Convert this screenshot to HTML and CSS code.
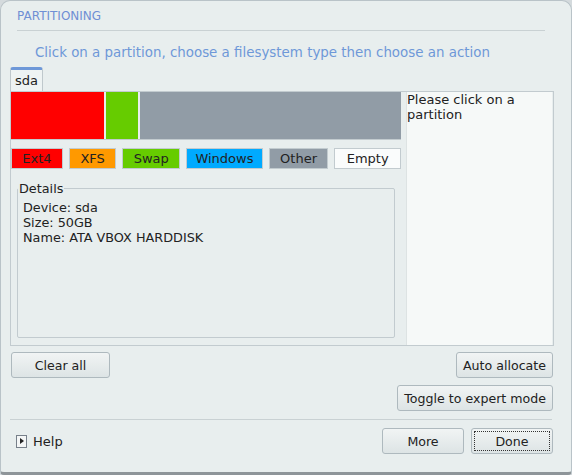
FILE: index.html
```html
<!DOCTYPE html>
<html lang="en">
<head>
    <meta charset="UTF-8">
    <title>Partitioning</title>
    <link rel="stylesheet" href="styles.css">
</head>
<body>
    <div class="window">
        <div class="heading">PARTITIONING</div>
        <p class="subtitle">Click on a partition, choose a filesystem type then choose an action</p>

        <div class="tabs">
            <span class="tab">sda</span>
        </div>
        <div class="panel">
            <div class="left">
                <div class="disk">
                    <div class="part ext4" style="width: 93px"></div>
                    <div class="part swap" style="width: 32px"></div>
                    <div class="part other grow"></div>
                </div>
                <div class="legend">
                    <span class="fs ext4">Ext4</span>
                    <span class="fs xfs">XFS</span>
                    <span class="fs swap">Swap</span>
                    <span class="fs windows">Windows</span>
                    <span class="fs other">Other</span>
                    <span class="fs empty">Empty</span>
                </div>
                <fieldset class="details">
                    <legend>Details</legend>
                    <div>Device: sda</div>
                    <div>Size: 50GB</div>
                    <div>Name: ATA VBOX HARDDISK</div>
                </fieldset>
            </div>
            <div class="info">Please click on a partition</div>
        </div>

        <div class="actions">
            <button class="btn clear">Clear all</button>
            <div class="right-actions">
                <button class="btn">Auto allocate</button>
                <button class="btn">Toggle to expert mode</button>
            </div>
        </div>

        <div class="footer">
            <div class="help"><span class="arrow"></span>Help</div>
            <div class="footer-btns">
                <button class="btn wide">More</button>
                <button class="btn wide focus">Done</button>
            </div>
        </div>
    </div>
</body>
</html>
```

FILE: styles.css
```css
body {
    margin: 0;
    background-color: #d4dadd;
    font-family: "DejaVu Sans", sans-serif;
    font-size: 12px;
    color: #222;
}
.window {
    box-sizing: border-box;
    width: 572px;
    height: 475px;
    background-color: #e8eeee;
    border: 1px solid #b9c3c8;
    border-bottom: 3px solid #8e9599;
    border-radius: 10px 10px 4px 4px;
    padding: 8px 17px 0 9px;
}
.heading {
    margin: 0 9px 0 7px;
    padding-bottom: 7px;
    border-bottom: 1px solid #c9d1d3;
    color: #6f8fd4;
    font-size: 12px;
}
.subtitle {
    margin: 14px 0 0 25px;
    color: #6e98d8;
    font-size: 13.4px;
}
.tabs {
    display: flex;
    margin-top: 7px;
}
.tab {
    display: inline-block;
    padding: 2px 4px 1px 4px;
    height: 18px;
    border: 1px solid #bfc8cc;
    border-top: 3px solid #6e98d8;
    border-bottom: none;
    border-radius: 3px 3px 0 0;
    background-color: #eef3f3;
    font-size: 13px;
    line-height: 18px;
}
.panel {
    display: flex;
    height: 253px;
    border: 1px solid #c2cbcf;
    background-color: #e8eeee;
}
.left {
    width: 390px;
    display: flex;
    flex-direction: column;
}
.disk {
    display: flex;
    height: 47px;
    border-bottom: 1px solid #c2cbcf;
}
.part {
    margin-right: 2px;
}
.part.grow {
    flex: 1;
    margin-right: 0;
}
.legend {
    display: flex;
    gap: 6px;
    margin-top: 8px;
}
.fs {
    box-sizing: border-box;
    height: 21px;
    line-height: 19px;
    text-align: center;
    border: 1px solid #c2cbcf;
    font-size: 13px;
    color: #222;
}
.ext4 { background-color: #ff0000; }
.xfs { background-color: #ff9900; }
.swap { background-color: #66cc00; }
.windows { background-color: #00aaff; }
.other { background-color: #919ca6; }
.empty { background-color: #ffffff; }
.legend .ext4 { width: 52px; }
.legend .xfs { width: 48px; }
.legend .swap { width: 58px; }
.legend .windows { width: 77px; }
.legend .other { width: 60px; }
.legend .empty { width: 67px; background-color: #fafcfc; }
.details {
    margin: 12px 6px 7px 6px;
    padding: 4px 5px 0 5px;
    flex: 1;
    border: 1px solid #c2cbcf;
    border-radius: 2px;
    font-size: 12.8px;
    line-height: 15px;
}
.details legend {
    padding: 0 1px;
    font-size: 12.8px;
    margin-left: -5px;
}
.info {
    flex: 1;
    margin-left: 5px;
    margin-right: 1px;
    background-color: #f6f9f8;
    border-left: 1px solid #dde3e3;
    padding: 0 2px 0 0;
    font-size: 13px;
    line-height: 15px;
}
.actions {
    display: flex;
    justify-content: space-between;
    align-items: flex-start;
    margin-top: 6px;
    padding-right: 1px;
    height: 67px;
    border-bottom: 1px solid #c9d1d3;
    margin-right: 2px;
}
.right-actions {
    display: flex;
    flex-direction: column;
    align-items: flex-end;
    gap: 7px;
    margin-right: -2px;
}
.btn {
    box-sizing: border-box;
    height: 26px;
    padding: 0 6px;
    font-family: "DejaVu Sans", sans-serif;
    font-size: 12.6px;
    color: #222;
    background: linear-gradient(#f1f4f4, #dde4e5);
    border: 1px solid #aeb9be;
    border-radius: 3px;
}
.btn.clear {
    width: 99px;
    margin-left: 1px;
}
.footer {
    display: flex;
    justify-content: space-between;
    align-items: center;
    margin-top: 8px;
}
.help {
    display: flex;
    align-items: center;
    margin-left: 6px;
    font-size: 13px;
}
.arrow {
    box-sizing: border-box;
    display: inline-block;
    width: 11px;
    height: 13px;
    margin-right: 6px;
    border: 1px solid #77808a;
    background-color: #f4f6f6;
    position: relative;
}
.arrow::after {
    content: "";
    position: absolute;
    left: 3px;
    top: 2px;
    border-left: 4px solid #222;
    border-top: 3.5px solid transparent;
    border-bottom: 3.5px solid transparent;
}
.footer-btns {
    display: flex;
    gap: 7px;
    margin-right: 1px;
}
.btn.wide {
    width: 82px;
}
.btn.focus {
    outline: 1px dotted #333;
    outline-offset: -4px;
}
```
